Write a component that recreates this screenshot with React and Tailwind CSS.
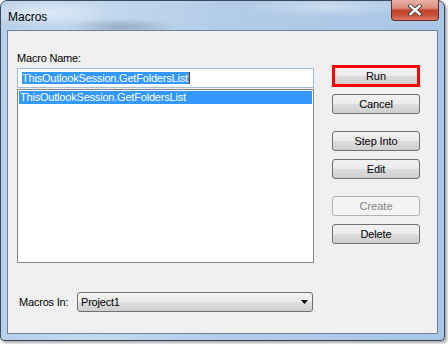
export default function App() {
  const btn =
    "h-[20px] w-[88px] rounded-[3px] border border-[#707070] bg-[linear-gradient(180deg,#f2f2f2_0%,#ebebeb_50%,#dddddd_51%,#cfcfcf_100%)] flex items-center justify-center text-[11px] text-black tracking-[-0.1px]";
  return (
    <div className="w-[448px] h-[344px] bg-white font-['Liberation_Sans',Arial,sans-serif]">
      <div className="relative w-[445px] h-[341px] rounded-t-[7px] rounded-b-[4px] border border-[#3b4a5b] bg-[linear-gradient(90deg,#b7cfea_0%,#c4d9ef_20%,#b3cce8_50%,#a9c6e6_100%)] flex flex-col shadow-[2px_2px_3px_rgba(0,0,0,0.35)]">
        {/* title bar */}
        <div className="h-[29px] rounded-t-[6px] flex items-center pl-[7px] pt-[2px] bg-[radial-gradient(ellipse_55px_9px_at_120px_26px,rgba(80,95,110,0.35),transparent),radial-gradient(ellipse_70px_14px_at_40px_12px,rgba(240,246,252,0.7),transparent),radial-gradient(ellipse_90px_10px_at_330px_6px,rgba(240,246,252,0.45),transparent)]">
          <span className="text-[12px] text-black leading-none">Macros</span>
        </div>
        {/* close button */}
        <div className="absolute left-[390px] top-[-1px] w-[48px] h-[21px] rounded-b-[4px] border border-t-0 border-[#6a2b22] bg-[linear-gradient(180deg,#e8b2a6_0%,#dc8c7c_40%,#c5432d_52%,#c9503a_75%,#dc7a66_100%)] flex items-center justify-center">
          <svg width="16" height="12" viewBox="0 0 16 12">
            <path d="M3.5 2 L12.5 10 M12.5 2 L3.5 10" stroke="#3d3d3d" strokeWidth="4.2" strokeLinecap="square" />
            <path d="M3.5 2 L12.5 10 M12.5 2 L3.5 10" stroke="#ffffff" strokeWidth="2.4" strokeLinecap="square" />
          </svg>
        </div>
        {/* client area */}
        <div className="mx-[6px] h-[304px] border border-[#6d8197] bg-[#f0f0f0] flex">
          {/* left column */}
          <div className="ml-[9px] w-[297px] pt-[21px] flex flex-col">
            <div className="h-[13px] text-[11px] leading-[13px] text-black tracking-[-0.2px]">Macro Name:</div>
            <div className="mt-[3px] h-[20px] border border-[#a3bcd8] bg-white flex items-center pl-[4px]">
              <span className="relative h-[12px] leading-[12px] bg-[#3399ff] text-white text-[11px] tracking-[-0.2px] pr-[1px]">
                ThisOutlookSession.GetFoldersList
                <span className="absolute right-[-1px] top-0 w-[1px] h-[12px] bg-[#7a3b10]" />
              </span>
            </div>
            <div className="mt-[1px] h-[174px] border border-[#828790] bg-white p-[1px]">
              <div className="h-[13px] bg-[#3399ff] text-white text-[11px] leading-[13px] tracking-[-0.2px] pl-[1px]">
                ThisOutlookSession.GetFoldersList
              </div>
            </div>
            <div className="mt-[29px] flex items-center">
              <div className="w-[60px] pl-[2px] text-[11px] text-black tracking-[-0.2px]">Macros In:</div>
              <div className="h-[20px] w-[236px] rounded-[3px] border border-[#707070] bg-[linear-gradient(180deg,#f2f2f2_0%,#ebebeb_50%,#dddddd_51%,#cfcfcf_100%)] flex items-center pl-[3px] pr-[4px]">
                <span className="flex-1 text-[11px] text-black tracking-[-0.2px]">Project1</span>
                <svg width="7" height="4" viewBox="0 0 7 4">
                  <polygon points="0,0 7,0 3.5,4" fill="#000" />
                </svg>
              </div>
            </div>
          </div>
          {/* right column */}
          <div className="ml-[18px] pt-[34px] flex flex-col">
            <div className="h-[22px] w-[88px] border-[3px] border-[#ff0000] bg-[linear-gradient(180deg,#f2f2f2_0%,#ebebeb_50%,#dddddd_51%,#cfcfcf_100%)] flex items-center justify-center text-[11px] text-black">
              Run
            </div>
            <div className={"mt-[7px] " + btn}>Cancel</div>
            <div className={"mt-[17px] " + btn}>Step Into</div>
            <div className={"mt-[8px] " + btn}>Edit</div>
            <div className="mt-[17px] h-[20px] w-[88px] rounded-[3px] border border-[#adb2b5] bg-[#f4f4f4] flex items-center justify-center text-[11px] text-[#838383]">
              Create
            </div>
            <div className={"mt-[8px] " + btn}>Delete</div>
          </div>
        </div>
      </div>
    </div>
  );
}
